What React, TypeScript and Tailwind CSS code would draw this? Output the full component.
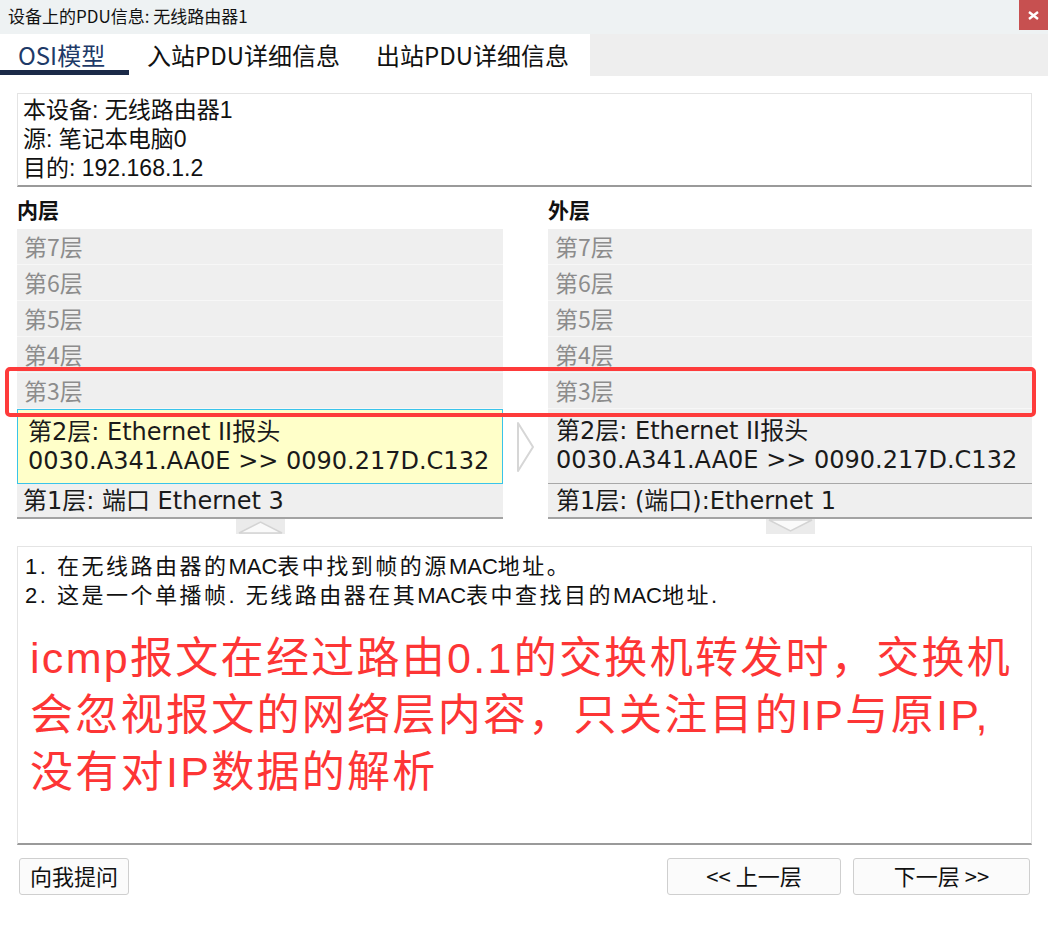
import React from "react";

const cjk = "font-['Noto_Sans_CJK_SC',sans-serif]";
const mixed = "font-['DejaVu_Sans','Noto_Sans_CJK_SC',sans-serif]";
const arial = "font-['Liberation_Sans','Noto_Sans_CJK_SC',sans-serif]";

const grayLayers = ["第7层", "第6层", "第5层", "第4层", "第3层"];

function UpTab() {
  return (
    <svg width="49" height="15" viewBox="0 0 49 15">
      <rect x="0" y="0" width="49" height="15" fill="#ebebeb" />
      <polygon points="3,14 24.5,3 46,14" fill="#fafafa" stroke="#d4d4d4" strokeWidth="1.5" />
    </svg>
  );
}

function DownTab() {
  return (
    <svg width="49" height="15" viewBox="0 0 49 15">
      <rect x="0" y="0" width="49" height="15" fill="#ebebeb" />
      <polygon points="3,1 24.5,12 46,1" fill="#fafafa" stroke="#d4d4d4" strokeWidth="1.5" />
    </svg>
  );
}

function Chevron() {
  return (
    <svg width="19" height="52" viewBox="0 0 19 52">
      <polygon points="2,2 17,26 2,50" fill="#ffffff" stroke="#d6d6d6" strokeWidth="2" strokeLinejoin="round" />
    </svg>
  );
}

function Mac() {
  return <span className="tracking-normal">MAC</span>;
}

export default function App() {
  return (
    <div className="relative w-[1048px] h-[936px] bg-white overflow-hidden text-[#111]">
      {/* Title bar */}
      <div className="h-[34px] bg-[#eef2f3] flex items-start justify-between">
        <div className={`${cjk} text-[17px] leading-[34px] pl-[8px] -mt-[1px]`}>
          设备上的PDU信息: 无线路由器1
        </div>
        <div className="w-[29px] h-[30px] bg-[#c75050] flex items-center justify-center">
          <svg width="11" height="9" viewBox="0 0 11 9">
            <path d="M1 1 L10 8 M10 1 L1 8" stroke="#ffffff" strokeWidth="2.4" />
          </svg>
        </div>
      </div>

      {/* Tabs */}
      <div className="h-[42px] flex bg-[#eeeeee]">
        <div className={`w-[590px] bg-white flex ${cjk} text-[24px]`}>
          <div className="relative w-[128px] flex items-center pl-[18px]">
            <span className="text-[#1e3a68]">OSI模型</span>
            <div className="absolute left-0 bottom-[1px] w-[129px] h-[5px] bg-[#1b2a48]" />
          </div>
          <div className="flex items-center pl-[19px]">入站PDU详细信息</div>
          <div className="flex items-center pl-[36px]">出站PDU详细信息</div>
        </div>
        <div className="flex-1" />
      </div>

      {/* Content */}
      <div className="pt-[17px] pl-[17px] pr-[16px]">
        <div className={`h-[94px] border border-[#e4e4e4] border-b-2 border-b-[#9a9a9a] px-[5px] pt-[2px] ${arial} text-[23px] leading-[29px]`}>
          <div>本设备: 无线路由器1</div>
          <div>源: 笔记本电脑0</div>
          <div>目的: 192.168.1.2</div>
        </div>

        <div className="grid grid-cols-[486px_45px_484px]">
          <div className={`h-[42px] flex items-end pb-[4px] ${cjk} font-bold text-[21px]`}>内层</div>
          <div />
          <div className={`h-[42px] flex items-end pb-[4px] ${cjk} font-bold text-[21px]`}>外层</div>

          {grayLayers.map((l) => (
            <React.Fragment key={l}>
              <div className={`h-[36px] bg-[#efefef] border-b border-b-[#f7f7f7] flex items-center pl-[7px] ${cjk} text-[23px] text-[#8c8c8c]`}>
                {l}
              </div>
              <div />
              <div className={`h-[36px] bg-[#efefef] border-b border-b-[#f7f7f7] flex items-center pl-[7px] ${cjk} text-[23px] text-[#8c8c8c]`}>
                {l}
              </div>
            </React.Fragment>
          ))}

          <div className={`h-[75px] bg-[#ffffc9] border border-[#39c3ea] flex flex-col justify-center pl-[10px] ${mixed} text-[24px] leading-[29px] text-[#1a1a1a]`}>
            <div>第2层: Ethernet II报头</div>
            <div>0030.A341.AA0E &gt;&gt; 0090.217D.C132</div>
          </div>
          <div className="flex items-center justify-center">
            <Chevron />
          </div>
          <div className={`h-[75px] bg-[#efefef] border-b border-b-[#a8a8a8] flex flex-col justify-center pl-[8px] ${mixed} text-[24px] leading-[29px] text-[#1a1a1a]`}>
            <div>第2层: Ethernet II报头</div>
            <div>0030.A341.AA0E &gt;&gt; 0090.217D.C132</div>
          </div>

          <div className={`h-[35px] bg-[#efefef] border-b-2 border-b-[#a3a3a3] flex items-center pl-[6px] ${mixed} text-[24px] text-[#1a1a1a]`}>
            第1层: 端口 Ethernet 3
          </div>
          <div />
          <div className={`h-[35px] bg-[#efefef] border-b-2 border-b-[#a3a3a3] flex items-center pl-[8px] ${mixed} text-[24px] text-[#1a1a1a]`}>
            第1层: (端口):Ethernet 1
          </div>

          <div className="h-[15px] flex justify-center">
            <UpTab />
          </div>
          <div />
          <div className="h-[15px] flex justify-center">
            <DownTab />
          </div>
        </div>

        {/* Description */}
        <div className="mt-[12px] h-[299px] border border-[#e4e4e4] border-b-2 border-b-[#9a9a9a] pl-[7px] pt-[5px]">
          <div className={`${arial} text-[22px] leading-[29px] tracking-[2.5px]`}>
            <div>1. 在无线路由器的<Mac />表中找到帧的源<Mac />地址。</div>
            <div>2. 这是一个单播帧. 无线路由器在其<Mac />表中查找目的<Mac />地址.</div>
          </div>
          <div className={`${arial} text-[43px] leading-[57px] tracking-[2.3px] text-[#fd3535] mt-[20px] pl-[5px]`}>
            <div>icmp报文在经过路由0.1的交换机转发时，交换机</div>
            <div>会忽视报文的网络层内容，只关注目的IP与原IP,</div>
            <div>没有对IP数据的解析</div>
          </div>
        </div>

        {/* Buttons */}
        <div className={`mt-[13px] flex ${cjk} text-[22px]`}>
          <button className="ml-[2px] w-[110px] h-[37px] bg-[#fbfbfb] border border-[#cfcfcf] rounded-[3px] leading-none pb-[3px]">
            向我提问
          </button>
          <div className="flex-1" />
          <button className="w-[174px] h-[37px] bg-[#fbfbfb] border border-[#cfcfcf] rounded-[3px] leading-none pb-[3px]">
            &lt;&lt; 上一层
          </button>
          <button className="ml-[12px] mr-[2px] w-[177px] h-[37px] bg-[#fbfbfb] border border-[#cfcfcf] rounded-[3px] leading-none pb-[3px]">
            下一层 &gt;&gt;
          </button>
        </div>
      </div>

      {/* Red annotation rectangle */}
      <div className="absolute left-[5px] top-[367px] w-[1031px] h-[50px] border-4 border-[#fe3b3b] rounded-[5px]" />
    </div>
  );
}
